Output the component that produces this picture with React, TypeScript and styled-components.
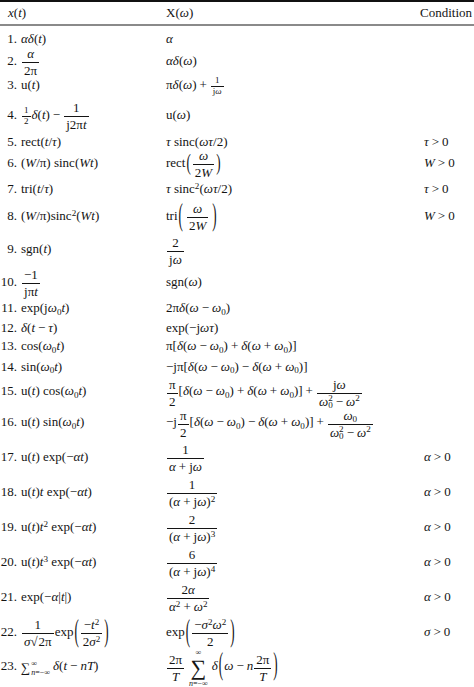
import React from 'react'
import styled, { createGlobalStyle } from 'styled-components'

const GlobalStyle = createGlobalStyle`
  html, body {
    margin: 0;
    padding: 0;
    background: #fff;
  }
  body {
    font-family: "Liberation Serif", "DejaVu Serif", serif;
    color: #141414;
  }
`

const Page = styled.div`
  width: 474px;
  height: 687px;
  overflow: hidden;
  font-family: "Liberation Serif", "DejaVu Serif", serif;
  font-size: 13px;
  line-height: 15px;
`

const Head = styled.div`
  display: flex;
  align-items: baseline;
  height: 22px;
  line-height: 22px;
  padding-right: 2px;
  border-top: 2px solid #111;
  border-bottom: 2px solid #8a8a8a;
`

const HeadCell = styled.div<{ $w?: number; $pad?: number }>`
  flex: ${(p) => (p.$w ? `0 0 ${p.$w}px` : '1')};
  padding-left: ${(p) => p.$pad ?? 0}px;
  box-sizing: border-box;
  white-space: nowrap;
`

const Row = styled.div<{ $h: number }>`
  display: flex;
  align-items: center;
  height: ${(p) => p.$h}px;
`

/* one shared baseline for the three cells of a row */
const Line = styled.div`
  display: flex;
  align-items: baseline;
  width: 100%;
  white-space: nowrap;
`

const Lhs = styled.div`
  flex: 0 0 166px;
`

const Idx = styled.span`
  display: inline-block;
  width: 17px;
  margin-right: 4px;
  text-align: right;
`

const Rhs = styled.div`
  flex: 1;
`

const Cond = styled.div`
  flex: 0 0 52px;
  padding-left: 2px;
  box-sizing: border-box;
`

const V = styled.i`
  font-style: italic;
`

const Sp = styled.span`
  position: relative;
  top: -0.45em;
  font-size: 0.7em;
  line-height: 0;
`

const Sb = styled.span`
  position: relative;
  top: 0.3em;
  font-size: 0.7em;
  line-height: 0;
`

const Op = styled.span`
  margin: 0 3px;
`

/* negative vertical margins keep tall pieces out of the line box height */
const Frac = styled.span<{ $small?: boolean; $gap?: number }>`
  display: inline-flex;
  flex-direction: column;
  vertical-align: middle;
  text-align: center;
  font-size: ${(p) => (p.$small ? '9px' : 'inherit')};
  line-height: ${(p) => (p.$small ? '9px' : '15px')};
  margin: ${(p) => (p.$small ? '-2.5px' : '-8.5px')} ${(p) => p.$gap ?? 1}px;
`

const Nu = styled.span`
  padding: 0 2px 1px;
`

const De = styled.span`
  padding: 0 2px;
  border-top: 1px solid currentColor;
`

const Paren = styled.span<{ $s: number }>`
  display: inline-block;
  transform: scaleY(${(p) => p.$s});
  transform-origin: 50% 59%;
  margin: 0 1px;
`

const Root = styled.span`
  border-top: 1px solid currentColor;
  padding-left: 1px;
`

const SumInline = styled.span`
  display: inline-flex;
  align-items: center;
  vertical-align: middle;
  margin: -2px 3px -2px 0;
`

const Limits = styled.span`
  display: inline-flex;
  flex-direction: column;
  font-size: 8px;
  line-height: 9px;
  margin-left: 1px;
`

const SumBig = styled.span`
  display: inline-flex;
  flex-direction: column;
  align-items: center;
  vertical-align: middle;
  margin: -12px 4px;
`

const Sigma = styled.span`
  font-size: 22px;
  line-height: 22px;
`

const Lim = styled.span`
  font-size: 8px;
  line-height: 9px;
`

const w0 = (
  <>
    <V>ω</V>
    <Sb>0</Sb>
  </>
)

const w0sq = (
  <>
    <V>ω</V>
    <Sp>2</Sp>
    <Sb style={{ marginLeft: '-0.5em' }}>0</Sb>
  </>
)

const deltas = (sign: string) => (
  <>
    [<V>δ</V>(<V>ω</V>
    <Op>−</Op>
    {w0})<Op>{sign}</Op>
    <V>δ</V>(<V>ω</V>
    <Op>+</Op>
    {w0})]
  </>
)

const apjw = (
  <>
    <V>α</V>
    <Op>+</Op>j<V>ω</V>
  </>
)

const gt = (v: React.ReactNode) => (
  <>
    <V>{v}</V>
    <Op>&gt;</Op>0
  </>
)

const tInv = (
  <>
    (<V>t</V>)
  </>
)

interface Pair {
  h: number
  lhs: React.ReactNode
  rhs: React.ReactNode
  cond?: React.ReactNode
}

const rows: Pair[] = [
  {
    h: 24,
    lhs: (
      <>
        <V>αδ</V>
        {tInv}
      </>
    ),
    rhs: <V>α</V>,
  },
  {
    h: 22.5,
    lhs: (
      <Frac>
        <Nu>
          <V>α</V>
        </Nu>
        <De>2π</De>
      </Frac>
    ),
    rhs: (
      <>
        <V>αδ</V>(<V>ω</V>)
      </>
    ),
  },
  {
    h: 25.5,
    lhs: <>u{tInv}</>,
    rhs: (
      <>
        π<V>δ</V>(<V>ω</V>)<Op>+</Op>
        <Frac $small>
          <Nu>1</Nu>
          <De>
            j<V>ω</V>
          </De>
        </Frac>
      </>
    ),
  },
  {
    h: 34,
    lhs: (
      <>
        <Frac $small>
          <Nu>1</Nu>
          <De>2</De>
        </Frac>
        <V>δ</V>
        {tInv}
        <Op>−</Op>
        <Frac>
          <Nu>1</Nu>
          <De>
            j2π<V>t</V>
          </De>
        </Frac>
      </>
    ),
    rhs: (
      <>
        u(<V>ω</V>)
      </>
    ),
  },
  {
    h: 19,
    lhs: (
      <>
        rect(<V>t</V>/<V>τ</V>)
      </>
    ),
    rhs: (
      <>
        <V>τ</V> sinc(<V>ωτ</V>/2)
      </>
    ),
    cond: gt('τ'),
  },
  {
    h: 24,
    lhs: (
      <>
        (<V>W</V>/π) sinc(<V>Wt</V>)
      </>
    ),
    rhs: (
      <>
        rect
        <Paren $s={1.8}>(</Paren>
        <Frac>
          <Nu>
            <V>ω</V>
          </Nu>
          <De>
            2<V>W</V>
          </De>
        </Frac>
        <Paren $s={1.8}>)</Paren>
      </>
    ),
    cond: gt('W'),
  },
  {
    h: 26.5,
    lhs: (
      <>
        tri(<V>t</V>/<V>τ</V>)
      </>
    ),
    rhs: (
      <>
        <V>τ</V> sinc<Sp>2</Sp>(<V>ωτ</V>/2)
      </>
    ),
    cond: gt('τ'),
  },
  {
    h: 30,
    lhs: (
      <>
        (<V>W</V>/π)sinc<Sp>2</Sp>(<V>Wt</V>)
      </>
    ),
    rhs: (
      <>
        tri
        <Paren $s={2.5}>(</Paren>
        <Frac $gap={3}>
          <Nu>
            <V>ω</V>
          </Nu>
          <De>
            2<V>W</V>
          </De>
        </Frac>
        <Paren $s={2.5}>)</Paren>
      </>
    ),
    cond: gt('W'),
  },
  {
    h: 36.5,
    lhs: <>sgn{tInv}</>,
    rhs: (
      <Frac>
        <Nu>2</Nu>
        <De>
          j<V>ω</V>
        </De>
      </Frac>
    ),
  },
  {
    h: 29,
    lhs: (
      <Frac>
        <Nu>−1</Nu>
        <De>
          jπ<V>t</V>
        </De>
      </Frac>
    ),
    rhs: (
      <>
        sgn(<V>ω</V>)
      </>
    ),
  },
  {
    h: 21,
    lhs: (
      <>
        exp(j{w0}
        <V>t</V>)
      </>
    ),
    rhs: (
      <>
        2π<V>δ</V>(<V>ω</V>
        <Op>−</Op>
        {w0})
      </>
    ),
  },
  {
    h: 18.5,
    lhs: (
      <>
        <V>δ</V>(<V>t</V>
        <Op>−</Op>
        <V>τ</V>)
      </>
    ),
    rhs: (
      <>
        exp(−j<V>ωτ</V>)
      </>
    ),
  },
  {
    h: 18.5,
    lhs: (
      <>
        cos({w0}
        <V>t</V>)
      </>
    ),
    rhs: <>π{deltas('+')}</>,
  },
  {
    h: 22.5,
    lhs: (
      <>
        sin({w0}
        <V>t</V>)
      </>
    ),
    rhs: <>−jπ{deltas('−')}</>,
  },
  {
    h: 28.5,
    lhs: (
      <>
        u{tInv} cos({w0}
        <V>t</V>)
      </>
    ),
    rhs: (
      <>
        <Frac>
          <Nu>π</Nu>
          <De>2</De>
        </Frac>
        {deltas('+')}
        <Op>+</Op>
        <Frac>
          <Nu>
            j<V>ω</V>
          </Nu>
          <De>
            {w0sq}
            <Op>−</Op>
            <V>ω</V>
            <Sp>2</Sp>
          </De>
        </Frac>
      </>
    ),
  },
  {
    h: 33.5,
    lhs: (
      <>
        u{tInv} sin({w0}
        <V>t</V>)
      </>
    ),
    rhs: (
      <>
        −j
        <Frac>
          <Nu>π</Nu>
          <De>2</De>
        </Frac>
        {deltas('−')}
        <Op>+</Op>
        <Frac>
          <Nu>{w0}</Nu>
          <De>
            {w0sq}
            <Op>−</Op>
            <V>ω</V>
            <Sp>2</Sp>
          </De>
        </Frac>
      </>
    ),
  },
  {
    h: 35,
    lhs: (
      <>
        u{tInv} exp(−<V>αt</V>)
      </>
    ),
    rhs: (
      <Frac>
        <Nu>1</Nu>
        <De>{apjw}</De>
      </Frac>
    ),
    cond: gt('α'),
  },
  {
    h: 35,
    lhs: (
      <>
        u{tInv}
        <V>t</V> exp(−<V>αt</V>)
      </>
    ),
    rhs: (
      <Frac>
        <Nu>1</Nu>
        <De>
          ({apjw})<Sp>2</Sp>
        </De>
      </Frac>
    ),
    cond: gt('α'),
  },
  {
    h: 35,
    lhs: (
      <>
        u{tInv}
        <V>t</V>
        <Sp>2</Sp> exp(−<V>αt</V>)
      </>
    ),
    rhs: (
      <Frac>
        <Nu>2</Nu>
        <De>
          ({apjw})<Sp>3</Sp>
        </De>
      </Frac>
    ),
    cond: gt('α'),
  },
  {
    h: 35,
    lhs: (
      <>
        u{tInv}
        <V>t</V>
        <Sp>3</Sp> exp(−<V>αt</V>)
      </>
    ),
    rhs: (
      <Frac>
        <Nu>6</Nu>
        <De>
          ({apjw})<Sp>4</Sp>
        </De>
      </Frac>
    ),
    cond: gt('α'),
  },
  {
    h: 35,
    lhs: (
      <>
        exp(−<V>α</V>|<V>t</V>|)
      </>
    ),
    rhs: (
      <Frac>
        <Nu>
          2<V>α</V>
        </Nu>
        <De>
          <V>α</V>
          <Sp>2</Sp>
          <Op>+</Op>
          <V>ω</V>
          <Sp>2</Sp>
        </De>
      </Frac>
    ),
    cond: gt('α'),
  },
  {
    h: 35,
    lhs: (
      <>
        <Frac>
          <Nu>1</Nu>
          <De>
            <V>σ</V>√<Root>2π</Root>
          </De>
        </Frac>
        exp
        <Paren $s={2.5}>(</Paren>
        <Frac>
          <Nu>
            −<V>t</V>
            <Sp>2</Sp>
          </Nu>
          <De>
            2<V>σ</V>
            <Sp>2</Sp>
          </De>
        </Frac>
        <Paren $s={2.5}>)</Paren>
      </>
    ),
    rhs: (
      <>
        exp
        <Paren $s={2.5}>(</Paren>
        <Frac>
          <Nu>
            −<V>σ</V>
            <Sp>2</Sp>
            <V>ω</V>
            <Sp>2</Sp>
          </Nu>
          <De>2</De>
        </Frac>
        <Paren $s={2.5}>)</Paren>
      </>
    ),
    cond: gt('σ'),
  },
  {
    h: 35,
    lhs: (
      <>
        <SumInline>
          ∑
          <Limits>
            <span>∞</span>
            <span>
              <V>n</V>=−∞
            </span>
          </Limits>
        </SumInline>
        <V>δ</V>(<V>t</V>
        <Op>−</Op>
        <V>nT</V>)
      </>
    ),
    rhs: (
      <>
        <Frac>
          <Nu>2π</Nu>
          <De>
            <V>T</V>
          </De>
        </Frac>
        <SumBig>
          <Lim>∞</Lim>
          <Sigma>∑</Sigma>
          <Lim>
            <V>n</V>=−∞
          </Lim>
        </SumBig>
        <V>δ</V>
        <Paren $s={2.4}>(</Paren>
        <V>ω</V>
        <Op>−</Op>
        <V>n</V>
        <Frac>
          <Nu>2π</Nu>
          <De>
            <V>T</V>
          </De>
        </Frac>
        <Paren $s={2.4}>)</Paren>
      </>
    ),
  },
]

const App = () => {
  return (
    <Page>
      <GlobalStyle />
      <Head>
        <HeadCell $w={166} $pad={8}>
          <V>x</V>(<V>t</V>)
        </HeadCell>
        <HeadCell>
          X(<V>ω</V>)
        </HeadCell>
        <HeadCell $w={60} style={{ textAlign: 'right' }}>
          Condition
        </HeadCell>
      </Head>
      {rows.map((r, i) => (
        <Row key={i} $h={r.h}>
          <Line>
            <Lhs>
              <Idx>{i + 1}.</Idx>
              {r.lhs}
            </Lhs>
            <Rhs>{r.rhs}</Rhs>
            <Cond>{r.cond}</Cond>
          </Line>
        </Row>
      ))}
    </Page>
  )
}

export default App
